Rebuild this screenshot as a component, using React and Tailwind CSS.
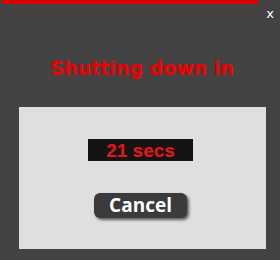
export default function App() {
  return (
    <div className="w-[280px] h-[260px] bg-[#434343] flex flex-col relative overflow-hidden">
      <div className="h-[4px] w-[256px] ml-[2px] bg-[#d80000]" />
      <div className="absolute right-[6px] top-[7px] text-white text-[13px] leading-none font-['DejaVu_Sans',sans-serif]">x</div>
      <div className="mt-[55px] text-center text-[#ee0000] font-bold text-[19px] leading-none font-['DejaVu_Sans',sans-serif] pl-[4px]">
        Shutting down in
      </div>
      <div className="mt-[29px] ml-[19px] w-[247px] h-[142px] bg-[#dfdfdf] flex flex-col items-center">
        <div className="mt-[32px] w-[105px] h-[22px] bg-[#141414] flex items-center justify-center text-[#e8141c] font-bold text-[19px] leading-none font-['Liberation_Sans',sans-serif] -ml-[4px]">
          21 secs
        </div>
        <button className="mt-[32px] w-[93px] h-[25px] rounded-[6px] bg-[#3b3b3b] text-white font-bold text-[19px] leading-none font-['Open_Sans',sans-serif] flex items-center justify-center shadow-[2px_2px_3px_rgba(0,0,0,0.6)] -ml-[4px]">
          Cancel
        </button>
      </div>
    </div>
  );
}
